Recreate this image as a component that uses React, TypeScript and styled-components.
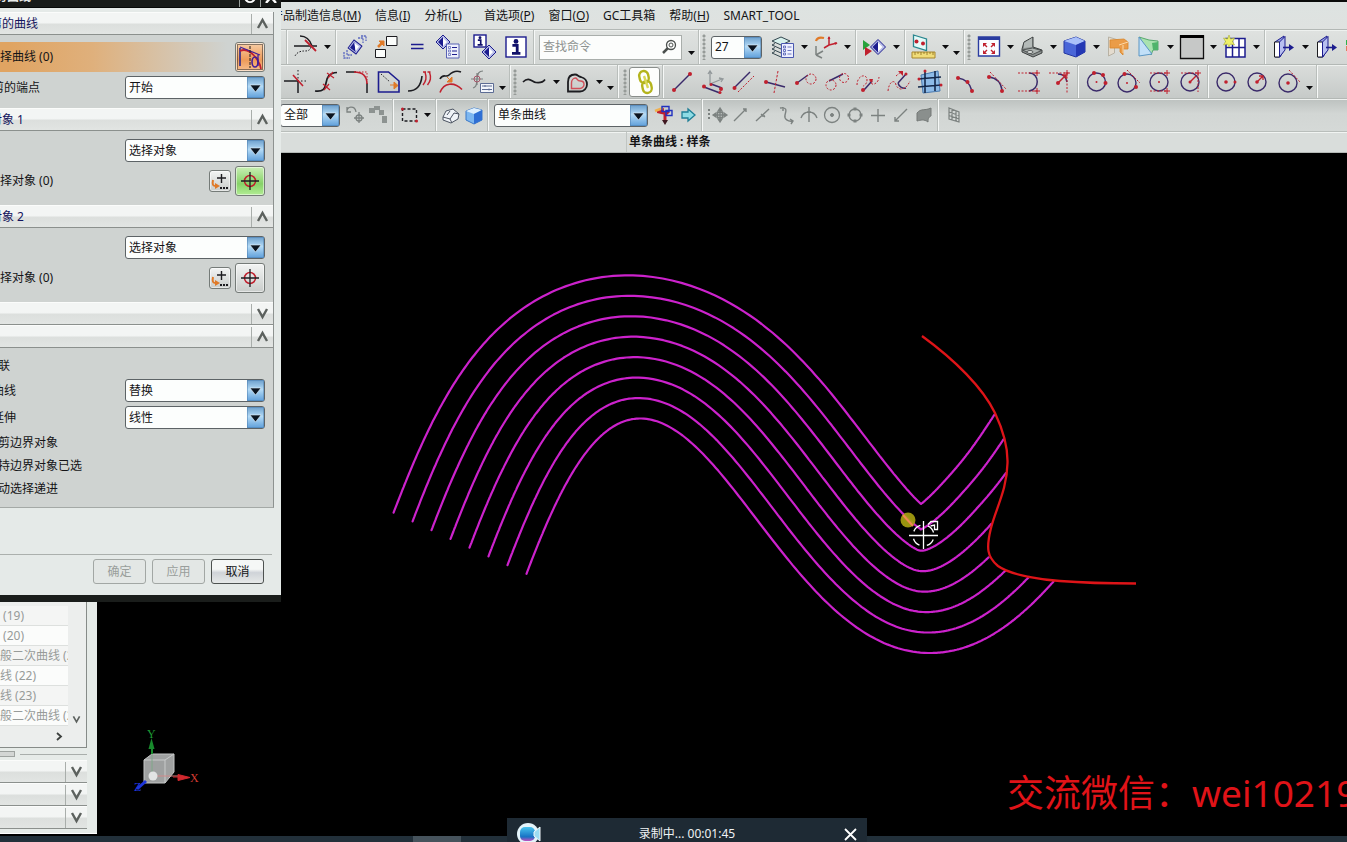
import React from "react";
import styled, { createGlobalStyle, css } from "styled-components";

const NAVY = "#1c1c8e";
const RED = "#c0202e";
const INK = "#1c1c20";
const GREY = "#7c8280";
const ORANGE = "#e07a28";
const PLUM = "#3a2a6a";

const GlobalStyle = createGlobalStyle`
  *, *::before, *::after { box-sizing: border-box; }
  html, body { margin: 0; padding: 0; background: #000; }
  body, button, input, select {
    font-family: "Noto Sans", "Noto Sans CJK SC", sans-serif;
    font-size: 12px;
    line-height: 18px;
    color: #141416;
  }
`;

/* ---------- shell ---------- */

const Shell = styled.div`
  position: relative;
  display: flex;
  flex-direction: column;
  height: 100vh;
  overflow: hidden;
  background: #000;
`;

const Header = styled.header`
  flex: none;
  border-top: 2px solid #0a0c0b;
  border-bottom: 1px solid #b4b9b6;
`;

const MenuBar = styled.nav`
  display: flex;
  align-items: center;
  gap: 14px;
  height: 27px;
  padding-left: 271px;
  background: linear-gradient(#dde3e1, #dfe2e0);
`;

const MenuLink = styled.a<{ $spaced?: boolean }>`
  color: #141416;
  text-decoration: none;
  white-space: nowrap;
  margin-left: ${(p) => (p.$spaced ? "8px" : "0")};
`;

const Toolbar = styled.div<{ $height: number; $inset: number; $tone: string }>`
  display: flex;
  align-items: center;
  height: ${(p) => p.$height}px;
  padding-left: ${(p) => p.$inset}px;
  border-top: 1px solid #b3b8b5;
  box-shadow: inset 0 1px 0 #eef1ef;
  background: ${(p) => p.$tone};
  overflow: hidden;
`;

const ToolButton = styled.button<{ $small?: boolean; $active?: boolean }>`
  display: flex;
  flex: none;
  align-items: center;
  justify-content: center;
  width: ${(p) => (p.$small ? 23 : 31)}px;
  height: ${(p) => (p.$small ? 24 : 30)}px;
  padding: 0;
  border: 1px solid transparent;
  border-radius: 3px;
  background: none;
  ${(p) =>
    p.$active &&
    css`
      border-color: #8a8f8c;
      background: #fdfefd;
    `}
  svg { flex: none; overflow: visible; }
`;

const DropButton = styled.button<{ $low?: boolean }>`
  display: flex;
  flex: none;
  align-items: center;
  justify-content: center;
  width: ${(p) => (p.$low ? 10 : 12)}px;
  height: 30px;
  padding: ${(p) => (p.$low ? "12px 0 0" : "0")};
  border: 0;
  background: none;
`;

const Divider = styled.span<{ $wide?: boolean }>`
  flex: none;
  align-self: stretch;
  width: ${(p) => (p.$wide ? 8 : 6)}px;
  background: linear-gradient(#b9bebb, #b9bebb) 2px 0 / 1px 100% no-repeat,
    linear-gradient(#f6f8f7, #f6f8f7) 3px 0 / 1px 100% no-repeat;
`;

const Grip = styled.span`
  flex: none;
  width: 6px;
  height: 26px;
  background: radial-gradient(circle at 2px 2px, #969b98 1px, transparent 2px) 0 0 / 6px 4px;
`;

const SearchBox = styled.label`
  display: flex;
  flex: none;
  align-items: center;
  width: 143px;
  height: 25px;
  margin: 0 4px 0 2px;
  padding: 0 4px 0 3px;
  border: 1px solid #a9aeab;
  background: #fcfdfc;
  input {
    flex: 1;
    min-width: 0;
    padding: 0;
    border: 0;
    outline: 0;
    background: none;
  }
  input::placeholder { color: #8e9290; opacity: 1; }
`;

const StatusBar = styled.div`
  display: flex;
  align-items: center;
  height: 21px;
  padding-left: 626px;
  border-top: 1px solid #b9bebb;
  box-shadow: inset 0 1px 0 #f1f4f2;
  background: #d9dddb;
  strong {
    padding-left: 2px;
    border-left: 1px solid #c0c5c2;
    line-height: 20px;
  }
`;

/* ---------- select ---------- */

const SelectWrap = styled.span<{ $width: number; $space?: string }>`
  position: relative;
  display: flex;
  flex: none;
  width: ${(p) => p.$width}px;
  height: 23px;
  margin: ${(p) => p.$space ?? "0"};
  select {
    appearance: none;
    width: 100%;
    height: 100%;
    padding: 0 20px 0 3px;
    border: 1px solid #5d6366;
    border-radius: 3px;
    background: #fcfefd;
    outline: 0;
  }
  svg {
    position: absolute;
    top: 1px;
    right: 1px;
    pointer-events: none;
  }
`;

function Select({ label, value, width, space }: { label: string; value: string; width: number; space?: string }) {
  return (
    <SelectWrap $width={width} $space={space}>
      <select aria-label={label} defaultValue={value}>
        <option>{value}</option>
      </select>
      <svg width="17" height="21" viewBox="0 0 17 21">
        <defs>
          <linearGradient id="drop" x1="0" y1="0" x2="0" y2="1">
            <stop offset="0" stopColor="#6c9fcc" />
            <stop offset="0.45" stopColor="#b4dbf6" />
            <stop offset="1" stopColor="#5f9fda" />
          </linearGradient>
        </defs>
        <rect width="17" height="21" rx="1" fill="url(#drop)" stroke="#4a7dad" />
        <path d="M3 8h11l-5.500 7z" fill="#0a1420" stroke="#e4f2fb" strokeWidth="0.600" />
      </svg>
    </SelectWrap>
  );
}

/* ---------- icons ---------- */

const Diamond = ({ x, y, r }: { x: number; y: number; r: number }) => (
  <g strokeWidth="1">
    <path d={`M${x - r} ${y}L${x} ${y - r}L${x + r} ${y}L${x} ${y + r}z`} fill="#b9bfe8" stroke={NAVY} />
    <path d={`M${x} ${y - r + 2}v${2 * r - 4}l${-r + 2} ${-r + 2}z`} fill={NAVY} />
    <path d={`M${x} ${y - r + 3}v${2 * r - 6}l${r - 3} ${-r + 3}z`} fill="#fff" />
  </g>
);

const Dot = ({ x, y, r = 2 }: { x: number; y: number; r?: number }) => (
  <circle cx={x} cy={y} r={r} fill={RED} stroke="none" />
);

const InfoMark = ({ x, y, w, h }: { x: number; y: number; w: number; h: number }) => {
  const c = x + w / 2;
  return (
    <g>
      <rect x={x} y={y} width={w} height={h} fill="#fff" stroke={NAVY} strokeWidth="1.400" />
      <path
        d={`M${c - w * 0.18} ${y + h * 0.42}H${c + w * 0.06}V${y + h * 0.82}M${c - w * 0.2} ${y + h * 0.82}H${c + w * 0.22}`}
        stroke="#10106a"
        strokeWidth={w * 0.14}
        fill="none"
      />
      <circle cx={c} cy={y + h * 0.22} r={w * 0.12} fill="#10106a" />
    </g>
  );
};

const DoorOut = () => (
  <g>
    <path d="M3 7L12 1v14l-4 7H3z" fill="#9aa4e4" stroke={NAVY} />
    <path d="M2.500 7h5v15h-5z" fill="#fff" stroke={INK} />
    <path d="M7.500 7L13 1.500V15l-5.500 7z" fill="#b8bff0" stroke={NAVY} />
    <path d="M11 12.500h7" stroke={NAVY} strokeWidth="1.600" />
    <path d="M17 9l5 3.500-5 3.500z" fill={NAVY} />
  </g>
);

const Corner = ({ x, y }: { x: number; y: number }) => (
  <path d={`M${x - 3} ${y}h6M${x} ${y - 3}v6`} stroke={RED} />
);

const icons: Record<string, React.ReactNode> = {
  quickTrim: (
    <g>
      <path d="M0 11h23M6 1c7 0 10 4 12 10" stroke={INK} strokeWidth="1.500" />
      <path d="M17 12c-1 4-4 4-7 4s-7 1-9 5" stroke={INK} strokeDasharray="1.500 1.500" />
      <path d="M11 5l11 11" stroke={RED} strokeWidth="1.800" />
    </g>
  ),
  objectMove: (
    <g>
      <g transform="rotate(-8 12 12)"><Diamond x={12} y={12} r={7} /></g>
      <path d="M18 1h5v5M15 3h5v5M1 17v6h6M4 15v5h5" stroke="#5a68c0" strokeDasharray="2 .8" strokeWidth="1.300" />
    </g>
  ),
  swapBoxes: (
    <g>
      <path d="M12.500 1.500h10.500v9h-10.500zM1.500 14.500h10v8h-10z" fill="#fbfdfb" stroke={INK} />
      <path d="M4 12l4-4" stroke={ORANGE} strokeWidth="2.500" />
      <path d="M5 6h5v5z" fill={ORANGE} stroke={ORANGE} />
    </g>
  ),
  equals: <path d="M6 9.500h12.500M6 13.500h12.500" stroke={NAVY} strokeWidth="1.300" />,
  objectList: (
    <g>
      <Diamond x={7} y={7} r={7} />
      <path d="M10.500 9h12.500v14h-12.500z" fill="#eef0fb" stroke="#5862b4" />
      <path d="M16 12.500h5M16 16h5M16 19.500h5" stroke={NAVY} />
      <path d="M12.500 11.500h2v2h-2zM12.500 15h2v2h-2zM12.500 18.500h2v2h-2z" stroke="#5862b4" strokeWidth=".7" />
    </g>
  ),
  objectInfo: (
    <g>
      <Diamond x={16} y={17} r={7} />
      <InfoMark x={1} y={0} w={12} h={12} />
    </g>
  ),
  info: <InfoMark x={2} y={2} w={20} h={20} />,
  layers: (
    <g>
      <path d="M1 6l9-4 9 4-9 4z" fill="#d6f0ec" stroke="#33464e" />
      <path d="M1 10l9 4 5-2M1 14l9 4M1 18l9 4M1 10l3-1.500M1 14l3-1.500M1 18l3-1.500" stroke="#33464e" />
      <path d="M10.500 8.500h12v14h-12z" fill="#eef0ff" stroke="#4a58b0" />
      <path d="M16.500 12h4M16.500 15.500h4M16.500 19h4M12.500 11h2v2h-2zM12.500 14.500h2v2h-2zM12.500 18h2v2h-2z" stroke="#4a58b0" strokeWidth=".8" />
    </g>
  ),
  datumAxes: (
    <g>
      <path d="M2 11v9M2 20l6 3M2 20l7-4" stroke={GREY} strokeWidth="1.500" />
      <path d="M15 2v8l8-2M15 10l-5 3" stroke={RED} strokeWidth="1.500" />
      <path d="M13.500 4l1.500-3 1.500 3zM20.500 7l3 1-2 2z" fill={RED} />
      <path d="M2 6c1-3 4-4 8-3" stroke={ORANGE} strokeWidth="2.200" />
    </g>
  ),
  playObject: (
    <g>
      <path d="M0 5l7 5-7 5z" fill="#27a33c" />
      <path d="M2 12l7 4-7 5z" fill={RED} />
      <Diamond x={15} y={12} r={7.5} />
    </g>
  ),
  measure: (
    <g>
      <path d="M1.500 0l13 4v11.500l-13-4z" fill="#e4faf8" stroke="#28868e" strokeWidth="1.300" />
      <Dot x={4.5} y={6.5} />
      <Dot x={11} y={8.500} />
      <path d="M0 17h23v6H0z" fill="#f0dc78" stroke="#a8872c" />
      <path d="M3 17v3M6 17v2M9 17v3M12 17v2M15 17v3M18 17v2M21 17v3" stroke="#8a6a1c" strokeWidth=".8" />
    </g>
  ),
  fit: (
    <g>
      <path d="M1.500 2h21v19h-21z" fill="#fbfcff" stroke="#2a3ca0" strokeWidth="1.400" />
      <path d="M1 3.500h22" stroke="#2a3ca0" strokeWidth="3" />
      <path d="M6 8h4l-4 4zM18 8h-4l4 4zM6 19h4l-4-4zM18 19h-4l4-4z" fill={RED} />
      <path d="M7 9l3 3M17 9l-3 3M7 18l3-3M17 18l-3-3" stroke={RED} strokeWidth="1.400" />
    </g>
  ),
  orientView: (
    <g>
      <path d="M2 14L4 7l9-5v10l9 3v3l-9 4-11-5z" fill="#8c9190" stroke="#3c4040" />
      <path d="M4 13V8l8-5v9z" fill="#b4bab8" />
      <path d="M2.500 15l10-2 9 2.500-9 4z" fill="#aeb4b2" stroke="#3c4040" strokeWidth=".8" />
      <ellipse cx="10" cy="17" rx="3" ry="1.500" fill="#dfe3e1" stroke="#3c4040" strokeWidth=".8" />
    </g>
  ),
  shaded: (
    <g>
      <path d="M1 6l12-4 9 4v11l-9 5-12-4z" fill="#4a66d8" stroke="#2436a0" />
      <path d="M1 6l12-4 9 4-9 4z" fill="#a9c0fa" />
      <path d="M13 10l9-4v11l-9 5z" fill="#2438b4" />
    </g>
  ),
  sectionOn: (
    <g>
      <path d="M2.500 2v19l6-3V10h7V6z" fill="#e4dccf" stroke="#b8b2a4" />
      <path d="M4 5l14-1 4 3v7h-5v6l-3-3v-4H4z" fill="#ea9c48" stroke="#d8862c" strokeWidth=".8" />
      <path d="M13 10l9-3M17 10v8" stroke="#fbd8a8" />
    </g>
  ),
  sectionEdit: (
    <g>
      <path d="M2 2l10 3 9 1v9h-5l-2 5z" fill="#a9e2b0" stroke="#3b9a58" strokeWidth=".8" />
      <path d="M2 2l13 17-13 2z" fill="#c2e0f8" stroke="#5b96c4" />
      <path d="M15 8l6-1v8h-5z" fill="#4fb46c" />
    </g>
  ),
  background: (
    <g>
      <path d="M.5 1h23v22.500H.5z" fill="#c6c8c7" stroke="#101010" strokeWidth="1.300" />
      <path d="M0 1.500h24" stroke="#000" strokeWidth="3" />
    </g>
  ),
  grid: (
    <g>
      <path d="M3 3.500h19v18.500H3zM3 12.500h19M9.500 3v19M16 3v19" fill="#fff" stroke={NAVY} strokeWidth="1.500" />
      <path d="M6 0l1.500 4 4-1-2 3.500 2 3.500-4-1L6 12l-1.500-3-4 1 2-3.500-2-3.500 4 1z" fill="#eef06a" stroke="#b0b840" strokeWidth=".7" />
    </g>
  ),
  doorOut: <DoorOut />,
  flags: (
    <g>
      <path d="M0 5h8v5H0z" fill="#2cb34a" />
      <path d="M0 11h8v5H0z" fill="#e27a60" />
    </g>
  ),

  trimCorner: (
    <g>
      <path d="M0 11h14v12" stroke={INK} strokeWidth="1.500" />
      <path d="M14 0v11h9" stroke={INK} strokeDasharray="1.500 2" />
      <path d="M9 5l10 11" stroke={RED} strokeWidth="1.600" />
    </g>
  ),
  bridge: (
    <g>
      <path d="M0 21c8 1 10-2 11-8S14 3 22 2.500" stroke={INK} strokeWidth="1.700" />
      <path d="M12 3l7 5M8 14l7 6M18 2l-5 6M14 14l-5 6" stroke={RED} strokeWidth="1.200" />
    </g>
  ),
  fillet: (
    <g>
      <path d="M0 2h10M21 13v10" stroke={INK} strokeWidth="1.500" />
      <path d="M8 2c9 0 13 4 13 12" stroke={RED} strokeWidth="1.600" />
      <path d="M13 2h8v8" stroke={RED} strokeDasharray="1.500 1.500" />
    </g>
  ),
  chamfer: (
    <g>
      <path d="M1.500 2h10L22 11v11H1.500z" stroke={NAVY} strokeWidth="1.600" />
      <path d="M4 4l9 8" stroke={INK} strokeDasharray="1.500 1.500" />
      <path d="M13 15h5M17 12l4 3.500-4 3.500z" stroke={ORANGE} fill={ORANGE} />
    </g>
  ),
  offset: (
    <g>
      <path d="M0 21c8 0 13-5 14-15" stroke={INK} strokeWidth="1.600" />
      <path d="M17 2c2 6 1 9-2 13M21.500 2c2 6 1 9-2 13M15 2h3M19.500 2h3" stroke={RED} strokeWidth="1.400" />
    </g>
  ),
  project: (
    <g>
      <path d="M1 9c3-6 6-1 9-4s7-5 12-3" stroke={INK} strokeWidth="1.600" />
      <path d="M1 22.500c4-10 14-11 22-3" stroke={RED} strokeWidth="1.600" />
      <path d="M8 7l3 3M8 12h5V7z" fill={ORANGE} stroke={ORANGE} />
    </g>
  ),
  editParams: (
    <g>
      <path d="M1 9h12M7 3v12M13 1C7 1 8 6 7 9s1 8-4 9" stroke={GREY} strokeWidth="1.200" />
      <circle cx="7" cy="9" r="3" stroke="#a8566a" />
      <path d="M10.500 13.500h13v9h-13z" fill="#f3f6fb" stroke="#5c6c94" />
      <path d="M12 16h10M12 19.500h10M15 15v2M19 18.500v2" stroke="#5c6c94" />
    </g>
  ),
  spline: <path d="M0 12c6-6 9 0 13 .5s7 0 9-3" stroke={INK} strokeWidth="1.700" />,
  offsetShape: (
    <g>
      <path d="M2 21.500V12c0-5 3-7.500 7-7.500 3 0 3 2 6 2.500 4 1 6 4 6 7.500s-3 7-7 7z" stroke={INK} strokeWidth="1.800" />
      <path d="M5.500 18.500V13c0-3 2-5 4-5s1 3 5 3c2 0 3.500 1.500 3.500 3.500s-2 4-4 4z" stroke="#d0505a" strokeWidth="1.400" />
    </g>
  ),
  chain: (
    <g strokeWidth="2.400" stroke="#b4b41c">
      <rect x="6.500" y="1" width="9" height="12" rx="4.500" transform="rotate(-12 11 7)" />
      <rect x="9.500" y="11" width="9" height="12" rx="4.500" transform="rotate(-12 14 17)" />
      <path d="M11 6l4 12" stroke="#d8d858" />
    </g>
  ),
  line: (
    <g>
      <path d="M4 20L20 4" stroke={PLUM} strokeWidth="1.500" />
      <Dot x={4} y={20} />
      <Dot x={20} y={4} />
    </g>
  ),
  axisLine: (
    <g>
      <path d="M9 14V2M9 14l12-5M7 4l2-3 2 3M18 8l4 1-2 3" stroke="#92989a" strokeWidth="1.300" />
      <path d="M3 17l16 6M10 14l11 4" stroke={PLUM} strokeWidth="1.500" />
      <Dot x={3} y={16.500} />
      <Dot x={10} y={14.500} r={1.5} />
      <Dot x={20} y={19} />
      <Dot x={19} y={22.500} r={1.500} />
    </g>
  ),
  parallel: (
    <g>
      <path d="M2 18L18 2" stroke={PLUM} strokeWidth="1.500" />
      <path d="M6 22L22 6" stroke={RED} strokeDasharray="2 1.500" />
      <Dot x={2.500} y={18} />
    </g>
  ),
  crossing: (
    <g>
      <path d="M3 12l19 5" stroke={PLUM} strokeWidth="1.500" />
      <path d="M15 1l-4 22" stroke={RED} strokeDasharray="2.500 1.500" />
      <Dot x={3} y={12} />
    </g>
  ),
  tangentPoint: (
    <g>
      <path d="M3 13L14 5" stroke={PLUM} strokeWidth="1.500" />
      <circle cx="17" cy="9" r="5" stroke={RED} strokeDasharray="2 1.500" />
      <Dot x={3} y={13} />
    </g>
  ),
  tangentTwo: (
    <g>
      <path d="M4 11L18 4" stroke={PLUM} strokeWidth="1.500" />
      <circle cx="6" cy="15" r="5" stroke={RED} strokeDasharray="2 1.500" />
      <circle cx="19" cy="8" r="4.500" stroke={RED} strokeDasharray="2 1.500" />
    </g>
  ),
  curvePoint: (
    <g>
      <path d="M8 20l8-9" stroke={PLUM} strokeWidth="1.500" />
      <path d="M1 15c0-10 10-12 10-5 0 4-3 6-4 6M14 10c1 8 9 3 9-3" stroke={RED} strokeDasharray="2 1.500" />
      <path d="M13 9l4 0-1 4z" fill={RED} />
      <Dot x={7} y={20} />
    </g>
  ),
  curveTangent: (
    <g>
      <path d="M11 13l8-9M11 13c1 4 5 6 8 5" stroke={PLUM} strokeWidth="1.500" />
      <path d="M1 21c1-10 7-12 8-6 2 5 9 7 14-4M9 6l6-5" stroke={RED} strokeDasharray="2 1.500" />
      <path d="M11 1h5v5z" fill={RED} />
      <Dot x={19} y={4} r={1.500} />
    </g>
  ),
  surfaceGrid: (
    <g>
      <path d="M3 5l17-4 2 20-17 2z" fill="#8dbbe8" stroke="#4a7ab0" />
      <path d="M7 1v22M17 1v20M0 9l23-2M0 17l23-2" stroke="#14284a" strokeWidth="1.600" />
      <Dot x={1} y={9} r={1.500} />
      <Dot x={7} y={1} r={1.500} />
      <Dot x={23} y={15} r={1.500} />
    </g>
  ),
  arcThree: (
    <g>
      <path d="M3 8c8 1 12 5 14 13" stroke={PLUM} strokeWidth="1.500" />
      <Dot x={3} y={8} /><Dot x={12.500} y={12} /><Dot x={17} y={21} />
    </g>
  ),
  arcTangent: (
    <g>
      <path d="M3 7c8 1 12 6 13 13" stroke={PLUM} strokeWidth="1.500" />
      <path d="M4 2l16 17" stroke={RED} strokeDasharray="2 1.500" />
      <Dot x={3} y={7} /><Dot x={16} y={21} />
    </g>
  ),
  arcTwoTangent: (
    <g>
      <path d="M12 3c11 0 11 17 0 18" stroke={PLUM} strokeWidth="1.500" />
      <path d="M1 3h20M1 21h20" stroke={RED} strokeDasharray="2 1.500" />
      <Corner x={20} y={3} /><Corner x={20} y={21} />
    </g>
  ),
  arcRadius: (
    <g>
      <path d="M10 4c5 0 8 3 9 8" stroke={PLUM} strokeWidth="1.500" />
      <path d="M1 3h20M19 3v20" stroke={RED} strokeDasharray="2 1.500" />
      <path d="M10 13l8-8M14 5h4v4" stroke={RED} strokeWidth="1.500" />
      <Dot x={10} y={13} /><Corner x={19} y={3} />
    </g>
  ),
  circleThree: (
    <g>
      <circle cx="11.500" cy="12" r="9" stroke={PLUM} strokeWidth="1.400" />
      <Dot x={11.500} y={12} r={1} /><Dot x={9} y={3} /><Dot x={18} y={5} /><Dot x={20.500} y={13} />
    </g>
  ),
  circleTangent: (
    <g>
      <circle cx="11" cy="13" r="9" stroke={PLUM} strokeWidth="1.400" />
      <path d="M11 0l13 13" stroke={RED} strokeDasharray="2 1.500" />
      <Dot x={11} y={13} r={1} /><Dot x={8.500} y={4} /><Dot x={20} y={17} />
    </g>
  ),
  circleTwoTangent: (
    <g>
      <circle cx="12" cy="12" r="9" stroke={PLUM} strokeWidth="1.400" />
      <path d="M3 3h18M3 21h18" stroke={RED} strokeDasharray="2 1.500" />
      <Dot x={12} y={12} r={1} /><Corner x={20} y={3} /><Corner x={20} y={21} />
    </g>
  ),
  circleTangentRadius: (
    <g>
      <circle cx="12" cy="12" r="9" stroke={PLUM} strokeWidth="1.400" />
      <path d="M3 3h18M20 3v19" stroke={RED} strokeDasharray="2 1.500" />
      <path d="M12 12l6-6" stroke={RED} strokeWidth="1.500" />
      <Dot x={12} y={12} r={1.500} /><Corner x={20} y={3} />
    </g>
  ),
  circleCentre: (
    <g>
      <circle cx="11" cy="12" r="9" stroke={PLUM} strokeWidth="1.400" />
      <Dot x={11} y={12} r={1.800} /><Dot x={20} y={12} r={1.500} />
    </g>
  ),
  circleRadius: (
    <g>
      <circle cx="11" cy="12" r="9" stroke={PLUM} strokeWidth="1.400" />
      <path d="M11 12l6-6M13 6h4v4" stroke={RED} strokeWidth="1.300" />
      <Dot x={11} y={12} r={1.800} />
    </g>
  ),
  circleCentreTangent: (
    <g>
      <circle cx="11" cy="13" r="9" stroke={PLUM} strokeWidth="1.400" />
      <path d="M12 0l11 12" stroke={RED} strokeDasharray="2 1.500" />
      <Dot x={11} y={13} r={1.800} />
    </g>
  ),

  snapUndo: (
    <g stroke={GREY} strokeWidth="1.300">
      <path d="M3 9c-1-6 8-7 9 0M3 4v5h4M15 9v11M10 15h10" />
      <circle cx="15" cy="15" r="3" />
    </g>
  ),
  snapPoints: <path d="M2 5h6v5H2zM7 3h6v4H7zM12 7h5v5h-5zM15 13h5v7h-5z" fill="#8d9391" />,
  marquee: (
    <g>
      <path d="M4.500 6h14v12h-14z" stroke={INK} strokeWidth="1.400" strokeDasharray="3 2" />
      <Dot x={4.500} y={6} r={1.500} /><Dot x={18.500} y={18} r={1.500} />
    </g>
  ),
  wireCube: (
    <g stroke="#4c5462">
      <path d="M4 14l3-6 7-2 6 5-1 5-7 4-8-3z" fill="#f0f4f8" />
      <path d="M4 14l7 2 2 4M11 16l4-6 5 1M8 12l3-4" />
    </g>
  ),
  blueCube: (
    <g>
      <path d="M4 8l8-3 8 2v10l-8 4-8-4z" fill="#7db7f0" stroke="#3a78c8" />
      <path d="M4 8l8-3 8 2-8 4z" fill="#dff0fe" />
      <path d="M12 11l8-4v10l-8 4z" fill="#2f6fd4" />
    </g>
  ),
  signpost: (
    <g>
      <path d="M12 10v8" stroke={RED} strokeWidth="3" />
      <path d="M9 17h6l-3 5z" fill="#401820" />
      <path d="M4 7l7-2v3l6 1-3 3-6-1-4-1z" fill={RED} />
      <path d="M2 8l8-3" stroke="#f0b050" strokeWidth="2.500" />
      <path d="M9 3.500h7v5H9zM13 7.500h6v5h-6z" stroke="#2030c0" strokeWidth="1.400" />
    </g>
  ),
  nextArrow: <path d="M6 9h6V6l7 6-7 6v-3H6z" fill="#8edce4" stroke="#1f7f96" strokeWidth="1.300" />,
  moveAll: (
    <g stroke={GREY} strokeWidth="1.300">
      <path d="M8 12h14M15 5v14M15 5l-2 3h4zM15 19l-2-3h4zM8 12l3-2v4zM22 12l-3-2v4z" />
      <path d="M4 6v12" strokeWidth="2" strokeDasharray="2 2" />
      <path d="M12.500 9.500h5v5h-5z" />
    </g>
  ),
  endPoint: <path d="M6 18L18 6M15 6l3 0 0 3" stroke={GREY} strokeWidth="1.400" />,
  midPoint: <path d="M5 18L18 6M10 11l4 3M11 13h3" stroke={GREY} strokeWidth="1.400" />,
  controlPoint: <path d="M6 5c8-1 6 3 5 7s3 7 8 6M9 4v4M16 16l3 2-2 3" stroke={GREY} strokeWidth="1.400" />,
  intersect: <path d="M12 4v15M4 15c3-8 13-8 16 0M10 9h4" stroke={GREY} strokeWidth="1.400" />,
  centre: (
    <g stroke={GREY}>
      <circle cx="12" cy="12" r="7.500" strokeWidth="1.300" />
      <circle cx="12" cy="12" r="1.500" fill={GREY} />
    </g>
  ),
  quadrant: (
    <g stroke={GREY}>
      <circle cx="12" cy="12" r="6" strokeWidth="1.300" />
      <path d="M12 4.500v3M12 16.500v3M4.500 12h3M16.500 12h3" strokeWidth="3" />
    </g>
  ),
  existing: <path d="M12 6v13M5 12.500h14" stroke={GREY} strokeWidth="1.400" />,
  onCurve: <path d="M6 18L18 6M6 14v4h4" stroke={GREY} strokeWidth="1.400" />,
  onFace: <path d="M5 10c4-5 8-2 14-5v8c-2 1-3 2-3 6-4-3-7-2-11-1z" fill="#8a8f8d" stroke="#747977" />,
  faceGrid: <path d="M8 5l10 4v10L8 16zM11 6v11M15 8v10M8 9l10 3.500M8 12.500l10 3.500" stroke={GREY} strokeWidth="1.200" />,
};

function Tool({ icon, label, small, active }: { icon: string; label: string; small?: boolean; active?: boolean }) {
  return (
    <ToolButton type="button" aria-label={label} $small={small} $active={active}>
      <svg width="24" height="24" viewBox="0 0 24 24" fill="none">{icons[icon]}</svg>
    </ToolButton>
  );
}

function Drop({ low }: { low?: boolean }) {
  return (
    <DropButton type="button" aria-label="更多" $low={low}>
      <svg width="7" height="4" viewBox="0 0 7 4"><path d="M0 0h7L3.500 4z" fill="#0c0c0e" /></svg>
    </DropButton>
  );
}

function ToolSet({ names }: { names: string[] }) {
  return <>{names.map((n) => <Tool key={n} icon={n} label={n} />)}</>;
}

/* ---------- dialog ---------- */

const Dialog = styled.section`
  position: absolute;
  top: -22px;
  left: -48px;
  width: 329px;
  border-bottom: 7px solid #1a1d1b;
  background: #e5eae8;
`;

const TitleBar = styled.div`
  display: flex;
  align-items: center;
  height: 30px;
  padding: 9px 0 0 31px;
  border-bottom: 1px solid #060807;
  background: #181b19;
  color: #e8ecea;
  h1 {
    flex: 1;
    margin: 0;
    font-size: 12px;
    line-height: 18px;
  }
  button {
    display: flex;
    align-items: center;
    justify-content: center;
    width: 21px;
    height: 20px;
    padding: 0;
    border: 0;
    border-left: 1px solid #9aa09d;
    background: none;
  }
`;

const Panel = styled.div`
  margin: 4px 7px 0 0;
  border-right: 1px solid #8d9290;
  border-bottom: 1px solid #a4a9a6;
  background: #cfd3d1;
`;

const SectionHeader = styled.button`
  display: flex;
  align-items: center;
  width: 100%;
  height: 23px;
  padding: 0 0 0 14px;
  border: 0;
  border-top: 1px solid #fbfcfb;
  border-bottom: 1px solid #8b908d;
  background: linear-gradient(#f3f5f4 45%, #dcdfdd 55%, #e2e5e3);
  color: #14145c;
  text-align: left;
  span { flex: 1; }
  i {
    display: flex;
    align-items: center;
    justify-content: center;
    width: 22px;
    height: 20px;
    border-left: 1px solid #a9aeab;
  }
`;

const Chevron = ({ up, size = 13 }: { up?: boolean; size?: number }) => (
  <svg width={size} height={size} viewBox="0 0 13 13">
    <path d={up ? "M2 11l4.500-8 4.500 8" : "M2 2l4.500 8L11 2"} fill="none" stroke="#5c615e" strokeWidth="2.400" />
  </svg>
);

function Section({ title, open }: { title: string; open?: boolean }) {
  return (
    <SectionHeader type="button" aria-expanded={!!open} aria-label={title || "展开"}>
      <span>{title}</span>
      <i><Chevron up={open} /></i>
    </SectionHeader>
  );
}

const SectionBody = styled.div<{ $top?: number; $bottom?: number }>`
  display: flex;
  flex-direction: column;
  gap: 4px;
  padding: ${(p) => p.$top ?? 8}px 8px ${(p) => p.$bottom ?? 9}px 0;
`;

const FieldRow = styled.div`
  display: flex;
  align-items: center;
  height: 23px;
  padding-left: 16px;
  > span:first-child { flex: 1; }
`;

const PickRow = styled.div<{ $hot?: boolean }>`
  display: flex;
  align-items: center;
  gap: 4px;
  height: 30px;
  padding-left: 36px;
  background: ${(p) => (p.$hot ? "linear-gradient(90deg, #e0a462 18%, #dfb07c 45%, #cfd3d1 88%)" : "none")};
  > span { flex: 1; }
`;

const CheckRow = styled.label`
  display: flex;
  align-items: center;
  gap: 5px;
  height: 19px;
  padding-left: 16px;
  white-space: nowrap;
  input {
    width: 13px;
    height: 13px;
    margin: 0;
  }
`;

const faces = {
  plain: "linear-gradient(#f2f4f3, #c9cdcb)",
  green: "linear-gradient(#c9efb4, #86d268 60%, #b2ec94)",
  orange: "linear-gradient(#f6cfa8, #ee9a58 60%, #f7bf90)",
};

const PickButton = styled.button<{ $face: keyof typeof faces; $mini?: boolean }>`
  display: flex;
  align-items: center;
  justify-content: center;
  width: ${(p) => (p.$mini ? 22 : 30)}px;
  height: ${(p) => (p.$mini ? 22 : 30)}px;
  padding: 0;
  border: 1px solid #757b78;
  border-radius: 3px;
  background: ${(p) => faces[p.$face]};
  box-shadow: inset 0 0 0 1px #ffffff80;
`;

const Footer = styled.footer`
  display: flex;
  justify-content: flex-end;
  gap: 6px;
  height: 41px;
  margin: 46px 9px 0 0;
  padding: 4px 8px 0 0;
  border-top: 1px solid #abb0ad;
`;

const ActionButton = styled.button`
  width: 53px;
  height: 25px;
  padding: 0;
  border: 1px solid #4d5250;
  border-radius: 3px;
  background: linear-gradient(#f5f7f6 40%, #cfd3d8 55%, #e6e9e8);
  &:disabled {
    border-color: #a2a7a4;
    background: #e3e7e5;
    color: #999e9b;
  }
`;

const TrimIcon = () => (
  <svg width="26" height="26" viewBox="0 0 26 26" fill="none">
    <rect x=".5" y=".5" width="25" height="25" stroke={INK} strokeDasharray="1 1" />
    <path d="M3 4v18" stroke={NAVY} strokeWidth="1.500" />
    <path d="M3 7c6-3 14 1 20 14l1 4" stroke={RED} strokeWidth="1.800" />
    <path d="M3 3l20 8M21 10v12" stroke="#40209a" strokeWidth="1.300" />
    <ellipse cx="18" cy="18" rx="3" ry="5" stroke="#40209a" strokeWidth="1.600" />
    <path d="M13 2v22" stroke={INK} strokeDasharray="3 1" />
  </svg>
);

const TargetIcon = () => (
  <svg width="20" height="20" viewBox="0 0 20 20" fill="none">
    <circle cx="10" cy="10" r="5.500" stroke={RED} strokeWidth="1.500" />
    <path d="M1 10h18M10 1v18" stroke={INK} strokeWidth="1.300" />
  </svg>
);

const PointIcon = () => (
  <svg width="20" height="20" viewBox="0 0 20 20" fill="none">
    <path d="M7 7h9M11.500 3v9" stroke={INK} strokeWidth="1.400" />
    <path d="M3 9c-1 5 0 6 3 6" stroke={ORANGE} strokeWidth="2" />
    <path d="M5 12l5 3-5 3z" fill={ORANGE} />
    <path d="M10 17h8" stroke={INK} strokeWidth="2" strokeDasharray="2 1" />
  </svg>
);

function PickObject({ green }: { green?: boolean }) {
  return (
    <SectionBody>
      <FieldRow>
        <span />
        <Select label="对象" value="选择对象" width={140} />
      </FieldRow>
      <PickRow>
        <span>选择对象 (0)</span>
        <PickButton type="button" aria-label="点构造器" $face="plain" $mini><PointIcon /></PickButton>
        <PickButton type="button" aria-label="选择对象" $face={green ? "green" : "plain"}><TargetIcon /></PickButton>
      </PickRow>
    </SectionBody>
  );
}

/* ---------- navigator ---------- */

const Workspace = styled.main`
  display: flex;
  flex: 1;
  min-height: 0;
`;

const Navigator = styled.aside`
  display: flex;
  flex: none;
  flex-direction: column;
  width: 145px;
  margin: 0 0 2px -48px;
  padding: 0 10px 4px 0;
  border-bottom: 1px solid #fff;
  background: #e6ebe8;
`;

const ListFrame = styled.div`
  display: grid;
  flex: 1;
  grid-template-columns: 1fr 18px;
  grid-template-rows: 1fr 21px;
  min-height: 0;
  border-right: 1px solid #868b88;
  border-bottom: 1px solid #868b88;
  background: #eceeed;
`;

const NodeList = styled.ul`
  display: flex;
  flex-direction: column;
  justify-content: flex-end;
  min-height: 0;
  margin: 0;
  padding: 0;
  overflow: hidden;
  list-style: none;
  li {
    flex: none;
    height: 20px;
    padding-left: 36px;
    border-bottom: 1px solid #dde0de;
    background: #fbfcfb;
    color: #979b99;
    line-height: 19px;
    white-space: nowrap;
    overflow: hidden;
  }
  li:nth-child(odd) { background: #f4f5f4; }
`;

const ScrollEnd = styled.button<{ $side?: boolean }>`
  display: flex;
  align-items: ${(p) => (p.$side ? "center" : "flex-end")};
  justify-content: ${(p) => (p.$side ? "flex-end" : "center")};
  padding: ${(p) => (p.$side ? "0 4px 0 0" : "0 2px 2px 0")};
  border: 0;
  background: none;
`;

const Splitter = styled.div`
  display: flex;
  align-items: center;
  gap: 5px;
  height: 12px;
  &::before {
    content: "";
    width: 63px;
    height: 6px;
    border: 1px solid #9ea3a0;
    background: #d3d6d4;
  }
  &::after {
    content: "";
    flex: 1;
    border-top: 1px solid #a9aeab;
  }
`;

const nodes = ["点 (19)", "点 (20)", "一般二次曲线 (21)", "直线 (22)", "直线 (23)", "一般二次曲线 (24)"];

/* ---------- model drawing ---------- */

type Point = [number, number];

const guide: Point[][] = [
  [[526, 575], [556, 496], [591, 418.5], [640, 418.5]],
  [[640, 418.5], [728, 418.5], [800, 653], [930, 653]],
  [[930, 653], [980, 653], [1020, 619], [1054, 581]],
  [[1054, 581], [1081, 551.5], [1097, 528], [1117, 497]],
];

const STEP = 20.45;
const SKEW = 0.085;
const WIDTH = 0.98;
const curveEnds = [1054, 1029, 1006, 989, 992, 1006, 1004, 995];

/* Samples along the guide, each with the direction in which its copies are spaced. */
const samples = guide.flatMap(([a, b, c, d]) =>
  Array.from({ length: 100 }, (_, i) => {
    const t = (i + 0.5) / 100;
    const u = 1 - t;
    const at = (k: 0 | 1) => u * u * u * a[k] + 3 * u * u * t * b[k] + 3 * u * t * t * c[k] + t * t * t * d[k];
    const slope = (k: 0 | 1) => u * u * (b[k] - a[k]) + 2 * u * t * (c[k] - b[k]) + t * t * (d[k] - c[k]);
    const nx = slope(1);
    const ny = -slope(0);
    const norm = Math.sqrt(WIDTH * nx * nx + 2 * SKEW * nx * ny + ny * ny);
    return { x: at(0), y: at(1), vx: (WIDTH * nx + SKEW * ny) / norm, vy: (SKEW * nx + ny) / norm };
  }),
);

const skewDistance = (dx: number, dy: number) =>
  Math.sqrt((dx * dx - 2 * SKEW * dx * dy + WIDTH * dy * dy) / (WIDTH - SKEW * SKEW));

/* Parallel copy of the guide; points that fall inside the offset loop are dropped. */
function parallelCurve(distance: number, endX: number) {
  return samples
    .map((s) => [s.x + s.vx * distance, s.y + s.vy * distance] as Point)
    .filter(([x], i) => i < 200 || x <= endX)
    .filter(([x, y]) => samples.every((s) => skewDistance(s.x - x, s.y - y) > distance - 0.4))
    .map(([x, y]) => `${x.toFixed(1)},${y.toFixed(1)}`)
    .join(" ");
}

const curves = curveEnds.map((end, i) => parallelCurve(i * STEP, end));

const Viewport = styled.div`
  position: relative;
  flex: 1;
  min-width: 0;
  overflow: hidden;
  background: #000;
  > svg {
    display: block;
    width: 100%;
    height: 100%;
  }
`;

const Watermark = styled.p`
  position: absolute;
  left: 910px;
  bottom: 16px;
  margin: 0;
  color: #e01318;
  font-size: 37px;
  line-height: 54px;
  white-space: nowrap;
`;

function Model() {
  return (
    <svg fill="none" role="img" aria-label="模型视图">
      <g transform="translate(-97 -153)">
        <g stroke="#cc22cc" strokeWidth="2.200" strokeLinecap="round" strokeLinejoin="round">
          {curves.map((points, i) => <polyline key={i} points={points} />)}
        </g>
        <path
          d="M922 336C955 360 983 388 995 413C1003 430 1008 445 1007.500 463C1007 490 996 508 991 528C986 548 987 557 998 566C1012 576 1045 580 1060 581C1085 583 1110 583.500 1136 583.500"
          stroke="#de1418"
          strokeWidth="2.300"
        />
        <circle cx="908" cy="520" r="7.500" fill="#a6a010" fillOpacity="0.920" />
        <path d="M903 515l10 11" stroke="#f08a50" strokeWidth="2" />
        <g stroke="#fff" strokeWidth="1.300">
          <path d="M909 535.500h29M923.500 521v28" />
          <circle cx="923.500" cy="535.500" r="10.500" strokeDasharray="9 7.500" strokeDashoffset="-4" />
          <path d="M928 524.500l3-3h6.500v8h-3v-4.500l-4 1" />
        </g>

        <path d="M144 760l8-6h22v18l-9 11h-21z" fill="#9fa1a1" stroke="#c4c6c6" />
        <path d="M144 760h21l9-6M165 760v23" stroke="#c8caca" />
        <path d="M152 752v24" stroke="#7fa888" />
        <path d="M151.500 738l-3 11h6z" fill="#188a2c" />
        <path d="M152 749v5" stroke="#188a2c" strokeWidth="2" />
        <path d="M154 776h24" stroke="#d08a8a" />
        <path d="M190 777.500l-12-3v6zM173 777h6" fill="#d0282e" stroke="#d0282e" />
        <path d="M146 781l-9 8" stroke="#1c34d8" strokeWidth="3" />
        <circle cx="153" cy="776" r="4.500" fill="#e2e4e4" />
        <g fontFamily="Liberation Serif, serif" fontSize="12">
          <text x="147" y="738" fill="#1c9a34">Y</text>
          <text x="190" y="782" fill="#d23a30">X</text>
          <text x="134" y="791" fill="#2038e0">Z</text>
        </g>
      </g>
    </svg>
  );
}

/* ---------- recorder and task bar ---------- */

const TaskBar = styled.div`
  flex: none;
  height: 6px;
  background: linear-gradient(90deg, #22303a 0 413px, #46535c 413px 461px, #22303a 461px);
`;

const Recorder = styled.div`
  position: absolute;
  bottom: -8px;
  left: calc(50% - 167px);
  display: flex;
  align-items: center;
  width: 360px;
  height: 32px;
  padding: 0 10px;
  background: #1e2a34;
  color: #eef2f4;
  span {
    flex: 1;
    padding-right: 10px;
    text-align: center;
  }
  button {
    display: flex;
    padding: 0;
    border: 0;
    background: none;
  }
`;

export default function App() {
  return (
    <>
      <GlobalStyle />
      <Shell>
        <Header>
          <MenuBar>
            <MenuLink href="#pmi">产品制造信息(<u>M</u>)</MenuLink>
            <MenuLink href="#info">信息(<u>I</u>)</MenuLink>
            <MenuLink href="#analysis">分析(<u>L</u>)</MenuLink>
            <MenuLink href="#preferences" $spaced>首选项(<u>P</u>)</MenuLink>
            <MenuLink href="#window">窗口(<u>O</u>)</MenuLink>
            <MenuLink href="#gc">GC工具箱</MenuLink>
            <MenuLink href="#help">帮助(<u>H</u>)</MenuLink>
            <MenuLink href="#smart">SMART_TOOL</MenuLink>
          </MenuBar>

          <Toolbar $height={35} $inset={284} $tone="linear-gradient(#dfe2e0, #d3d7d5)">
            <Divider />
            <ToolSet names={["quickTrim"]} />
            <Drop />
            <Divider />
            <ToolSet names={["objectMove", "swapBoxes", "equals", "objectList"]} />
            <Divider />
            <ToolSet names={["objectInfo", "info"]} />
            <Divider />
            <SearchBox>
              <input type="search" aria-label="查找命令" placeholder="查找命令" />
              <svg width="16" height="16" viewBox="0 0 16 16" fill="none" stroke="#4c504e">
                <circle cx="10" cy="6" r="4.500" strokeWidth="1.300" />
                <circle cx="10" cy="6" r="2" />
                <path d="M7 9l-5 5" strokeWidth="2.500" />
              </svg>
            </SearchBox>
            <Drop low />
            <Divider />
            <Grip />
            <Select label="图层" value="27" width={51} space="0 5px 0 3px" />
            <ToolSet names={["layers"]} />
            <Drop />
            <ToolSet names={["datumAxes"]} />
            <Drop />
            <Divider />
            <ToolSet names={["playObject"]} />
            <Drop />
            <Divider />
            <ToolSet names={["measure"]} />
            <Drop />
            <Drop low />
            <Divider />
            <Grip />
            <ToolSet names={["fit"]} />
            <Drop />
            <ToolSet names={["orientView"]} />
            <Drop />
            <ToolSet names={["shaded"]} />
            <Drop />
            <ToolSet names={["sectionOn", "sectionEdit"]} />
            <Drop />
            <ToolSet names={["background"]} />
            <Drop />
            <ToolSet names={["grid"]} />
            <Drop />
            <Divider />
            <ToolSet names={["doorOut"]} />
            <Drop />
            <ToolSet names={["doorOut", "flags"]} />
          </Toolbar>

          <Toolbar $height={34} $inset={280} $tone="linear-gradient(#dadddb, #c6cac8)">
            <ToolSet names={["trimCorner", "bridge", "fillet", "chamfer", "offset", "project", "editParams"]} />
            <Drop low />
            <Divider />
            <Grip />
            <ToolSet names={["spline"]} />
            <Drop />
            <ToolSet names={["offsetShape"]} />
            <Drop />
            <Drop low />
            <Divider $wide />
            <Grip />
            <Tool icon="chain" label="关联" active />
            <Divider />
            <ToolSet
              names={["line", "axisLine", "parallel", "crossing", "tangentPoint", "tangentTwo", "curvePoint", "curveTangent", "surfaceGrid"]}
            />
            <Divider />
            <ToolSet names={["arcThree", "arcTangent", "arcTwoTangent", "arcRadius"]} />
            <Divider />
            <ToolSet names={["circleThree", "circleTangent", "circleTwoTangent", "circleTangentRadius"]} />
            <Divider />
            <ToolSet names={["circleCentre", "circleRadius", "circleCentreTangent"]} />
            <Drop low />
            <Divider />
          </Toolbar>

          <Toolbar $height={33} $inset={280} $tone="linear-gradient(#bcc1bf, #d2d6d4 45%, #d5d9d7)">
            <Select label="类型过滤器" value="全部" width={60} space="0 4px 0 0" />
            <Tool small icon="snapUndo" label="重置过滤器" />
            <Tool small icon="snapPoints" label="取消选择" />
            <Divider $wide />
            <Tool small icon="marquee" label="矩形选择" />
            <Drop />
            <Divider />
            <Tool small icon="wireCube" label="隐藏边" />
            <Tool small icon="blueCube" label="着色" />
            <Divider />
            <Select label="曲线规则" value="单条曲线" width={154} space="0 5px 0 3px" />
            <Tool small icon="signpost" label="在相交处停止" />
            <Tool small icon="nextArrow" label="跟随圆角" />
            <Divider />
            {["moveAll", "endPoint", "midPoint", "controlPoint", "intersect", "centre", "quadrant", "existing", "onCurve", "onFace"].map((n) => (
              <Tool key={n} small icon={n} label={n} />
            ))}
            <Divider />
            <Tool small icon="faceGrid" label="面上网格" />
          </Toolbar>

          <StatusBar><strong>单条曲线 : 样条</strong></StatusBar>
        </Header>

        <Workspace>
          <Navigator>
            <ListFrame>
              <NodeList>{nodes.map((n) => <li key={n}>{n}</li>)}</NodeList>
              <ScrollEnd type="button" aria-label="向下滚动"><Chevron size={9} /></ScrollEnd>
              <ScrollEnd type="button" aria-label="向右滚动" $side>
                <svg width="9" height="9" viewBox="0 0 9 9"><path d="M2 1l4 3.500L2 8" fill="none" stroke="#3c403e" strokeWidth="1.800" /></svg>
              </ScrollEnd>
            </ListFrame>
            <Splitter />
            <Section title="" />
            <Section title="" />
            <Section title="" />
          </Navigator>
          <Viewport>
            <Model />
            <Watermark>交流微信：wei10219</Watermark>
          </Viewport>
        </Workspace>

        <TaskBar />

        <Recorder>
          <svg width="24" height="22" viewBox="0 0 24 22">
            <defs>
              <linearGradient id="lens" x1="0" y1="0" x2="0" y2="1">
                <stop offset="0" stopColor="#48c4ee" />
                <stop offset="0.700" stopColor="#1872c4" />
                <stop offset="1" stopColor="#c050c0" />
              </linearGradient>
            </defs>
            <circle cx="11" cy="11" r="11" fill="#e4f4fb" />
            <rect x="3" y="4" width="15" height="14" rx="5" fill="url(#lens)" />
            <path d="M17 9l6-5v14l-6-5z" fill="#9cdcf2" stroke="#f2f8fb" />
          </svg>
          <span>录制中... 00:01:45</span>
          <button type="button" aria-label="关闭">
            <svg width="13" height="13" viewBox="0 0 13 13"><path d="M1 1l11 11M12 1L1 12" stroke="#fff" strokeWidth="1.800" /></svg>
          </button>
        </Recorder>

        <Dialog aria-label="修剪曲线">
          <TitleBar>
            <h1>修剪曲线</h1>
            <button type="button" aria-label="重置">
              <svg width="12" height="12" viewBox="0 0 12 12"><path d="M2 3a5 5 0 1 0 8 0" fill="none" stroke="#fff" strokeWidth="2" /></svg>
            </button>
            <button type="button" aria-label="关闭">
              <svg width="12" height="12" viewBox="0 0 12 12"><path d="M1 0l10 12M11 0L1 12" stroke="#fff" strokeWidth="2.400" /></svg>
            </button>
          </TitleBar>
          <Panel>
            <Section title="要修剪的曲线" open />
            <SectionBody $top={7}>
              <PickRow $hot>
                <span>选择曲线 (0)</span>
                <PickButton type="button" aria-label="选择曲线" $face="orange"><TrimIcon /></PickButton>
              </PickRow>
              <FieldRow>
                <span>要修剪的端点</span>
                <Select label="要修剪的端点" value="开始" width={140} />
              </FieldRow>
            </SectionBody>
            <Section title="边界对象 1" open />
            <PickObject green />
            <Section title="边界对象 2" open />
            <PickObject />
            <Section title="" />
            <Section title="" open />
            <SectionBody>
              <CheckRow><input type="checkbox" defaultChecked />关联</CheckRow>
              <FieldRow>
                <span>输入曲线</span>
                <Select label="输入曲线" value="替换" width={140} />
              </FieldRow>
              <FieldRow>
                <span>曲线延伸</span>
                <Select label="曲线延伸" value="线性" width={140} />
              </FieldRow>
              <CheckRow><input type="checkbox" />修剪边界对象</CheckRow>
              <CheckRow><input type="checkbox" />保持边界对象已选</CheckRow>
              <CheckRow><input type="checkbox" />自动选择递进</CheckRow>
            </SectionBody>
          </Panel>
          <Footer>
            <ActionButton type="button" disabled>确定</ActionButton>
            <ActionButton type="button" disabled>应用</ActionButton>
            <ActionButton type="button">取消</ActionButton>
          </Footer>
        </Dialog>
      </Shell>
    </>
  );
}
